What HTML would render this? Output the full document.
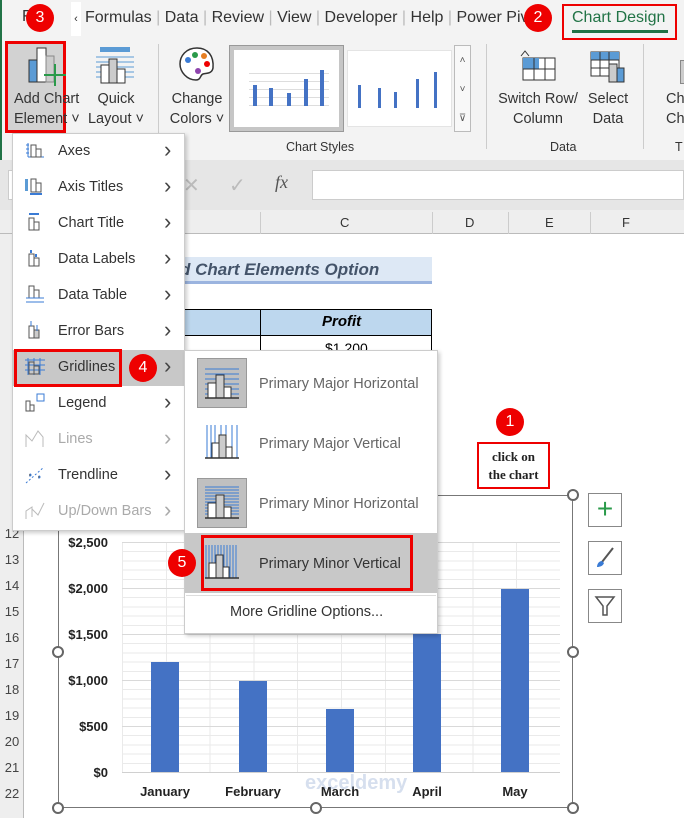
<!DOCTYPE html>
<html><head><meta charset="utf-8"><style>
*{margin:0;padding:0;box-sizing:border-box}
body{width:684px;height:818px;overflow:hidden;position:relative;background:#fff;font-family:"Liberation Sans",sans-serif;font-size:14px;color:#333}
.a{position:absolute}
.badge{position:absolute;width:28px;height:28px;border-radius:50%;background:#e00;color:#fff;font-size:16px;text-align:center;line-height:28px}
.mi{position:absolute;left:12px;width:172px;height:36px;font-size:14.5px;color:#333}
.mi span.t{position:absolute;left:46px;top:9px}
.mi .ch{position:absolute;left:152px;top:3px;font-size:22px;color:#444}
.si{position:absolute;left:184px;width:254px;height:60px}
.si .t{position:absolute;left:75px;top:22px;font-size:14.5px;color:#666}
.rn{position:absolute;left:2px;width:20px;text-align:center;font-size:13px;color:#444}
.yl{position:absolute;right:576px;font-size:13px;font-weight:bold;color:#222}
.ml{position:absolute;top:784px;font-size:13px;font-weight:bold;color:#222;transform:translateX(-50%)}
.bar{position:absolute;width:28px;background:#4472c4;bottom:46px}
.h{position:absolute;width:12px;height:12px;border:2px solid #666;border-radius:50%;background:#fff}
</style></head><body>
<div class="a" style="left:0;top:0;width:684px;height:160px;background:#f3f3f3"></div>
<div class="a" style="left:0;top:0;width:2px;height:818px;background:#217346"></div>
<div class="a" style="left:0;top:160px;width:684px;height:50px;background:#e6e6e6"></div>
<div class="a" style="left:22px;top:8px;font-size:16px;color:#333">F</div>
<div class="a" style="left:71px;top:2px;width:10px;height:34px;background:#fff;font-size:11px;text-align:center;line-height:34px">‹</div>
<div class="a" style="left:85px;top:9px;font-size:16px;color:#333;white-space:nowrap">Formulas<span style="color:#bbb"> | </span>Data<span style="color:#bbb"> | </span>Review<span style="color:#bbb"> | </span>View<span style="color:#bbb"> | </span>Developer<span style="color:#bbb"> | </span>Help<span style="color:#bbb"> | </span>Power Pivot</div>
<div class="a" style="left:562px;top:4px;width:115px;height:36px;border:2px solid #e00;background:#f3f3f3"></div>
<div class="a" style="left:572px;top:9px;font-size:16px;color:#217346">Chart Design</div>
<div class="a" style="left:572px;top:30px;width:96px;height:3px;background:#217346"></div>
<div class="badge" style="left:26px;top:4px">3</div>
<div class="badge" style="left:524px;top:4px">2</div>
<div class="a" style="left:5px;top:41px;width:61px;height:92px;background:#d2d2d2;border:3px solid #e00"></div>
<svg class="a" style="left:20px;top:44px" width="50" height="44"><rect x="9" y="16" width="8" height="22" fill="#5b9bd5" stroke="#333"/><rect x="17" y="4" width="9" height="34" fill="#fff" stroke="#333"/><rect x="26" y="12" width="8" height="26" fill="#ccc" stroke="#888"/><path d="M35 20v22M24 31h22" stroke="#2a9a4a" stroke-width="2"/></svg>
<div class="a" style="left:14px;top:89px;font-size:14.5px;line-height:20px;color:#333;white-space:nowrap">Add Chart<br>Element ˅</div>
<svg class="a" style="left:96px;top:47px" width="40" height="38"><rect x="4" y="0" width="30" height="5" fill="#5b9bd5"/><path d="M0 10h38M0 15h38M0 20h38M0 25h38M0 30h38" stroke="#5b9bd5"/><rect x="5" y="18" width="8" height="18" fill="#fff" stroke="#333"/><rect x="13" y="12" width="8" height="24" fill="#ccc" stroke="#333"/><rect x="21" y="22" width="8" height="14" fill="#fff" stroke="#333"/></svg>
<div class="a" style="left:80px;top:89px;font-size:14.5px;line-height:20px;text-align:center;width:72px;white-space:nowrap">Quick<br>Layout ˅</div>
<div class="a" style="left:158px;top:44px;width:1px;height:105px;background:#ccc"></div>
<svg class="a" style="left:178px;top:46px" width="38" height="36"><path d="M19 2C8 2 2 10 2 18s7 16 16 16c5 0 4-5 7-6s9 0 10-6C36 10 30 2 19 2z" fill="#fff" stroke="#333" stroke-width="1.5"/><circle cx="10" cy="14" r="3" fill="#3a7bd5"/><circle cx="17" cy="9" r="3" fill="#2a9a4a"/><circle cx="26" cy="10" r="3" fill="#e67e22"/><circle cx="29" cy="18" r="3" fill="#e00"/><circle cx="20" cy="25" r="3" fill="#8e44ad"/></svg>
<div class="a" style="left:160px;top:89px;font-size:14.5px;line-height:20px;text-align:center;width:74px;white-space:nowrap">Change<br>Colors ˅</div>
<div class="a" style="left:229px;top:45px;width:115px;height:87px;background:#c6c6c6;border:1px solid #999"></div>
<div class="a" style="left:234px;top:50px;width:105px;height:77px;background:#fff"></div>
<div class="a" style="left:249px;top:66px;width:80px;height:40px;background:repeating-linear-gradient(#fff 0 7px,#ddd 7px 8px)"></div>
<div class="a" style="left:253px;top:85px;width:4px;height:21px;background:#4472c4"></div>
<div class="a" style="left:269px;top:88px;width:4px;height:18px;background:#4472c4"></div>
<div class="a" style="left:287px;top:93px;width:4px;height:13px;background:#4472c4"></div>
<div class="a" style="left:304px;top:79px;width:4px;height:27px;background:#4472c4"></div>
<div class="a" style="left:320px;top:70px;width:4px;height:36px;background:#4472c4"></div>
<div class="a" style="left:347px;top:50px;width:105px;height:77px;background:#fff;border:1px solid #e4e4e4"></div>
<div class="a" style="left:358px;top:85px;width:3px;height:23px;background:#4472c4"></div>
<div class="a" style="left:378px;top:88px;width:3px;height:20px;background:#4472c4"></div>
<div class="a" style="left:394px;top:92px;width:3px;height:16px;background:#4472c4"></div>
<div class="a" style="left:416px;top:79px;width:3px;height:29px;background:#4472c4"></div>
<div class="a" style="left:434px;top:72px;width:3px;height:36px;background:#4472c4"></div>
<div class="a" style="left:454px;top:45px;width:17px;height:87px;border:1px solid #bbb;background:#f8f8f8;font-size:10px;text-align:center;color:#555;line-height:29px">˄<br>˅<br>⊽</div>
<div class="a" style="left:286px;top:140px;font-size:12.5px">Chart Styles</div>
<div class="a" style="left:486px;top:44px;width:1px;height:105px;background:#ccc"></div>
<svg class="a" style="left:519px;top:50px" width="38" height="32"><rect x="4" y="8" width="32" height="22" fill="#fff" stroke="#333"/><rect x="4" y="8" width="16" height="11" fill="#5b9bd5"/><path d="M4 19h32M15 8v22M26 8v22" stroke="#333"/><path d="M2 6l4-5 4 5" fill="none" stroke="#333"/></svg>
<div class="a" style="left:496px;top:89px;font-size:14.5px;line-height:20px;text-align:center;width:84px">Switch Row/<br>Column</div>
<svg class="a" style="left:589px;top:50px" width="40" height="36"><rect x="2" y="2" width="28" height="24" fill="#fff" stroke="#333"/><rect x="2" y="2" width="28" height="8" fill="#5b9bd5"/><path d="M2 10h28M2 18h28M11 2v24M20 2v24" stroke="#333"/><rect x="20" y="14" width="8" height="18" fill="#ccc" stroke="#333"/><rect x="28" y="18" width="7" height="14" fill="#5b9bd5" stroke="#333"/></svg>
<div class="a" style="left:586px;top:89px;font-size:14.5px;line-height:20px;text-align:center;width:44px">Select<br>Data</div>
<div class="a" style="left:550px;top:140px;font-size:12.5px">Data</div>
<div class="a" style="left:643px;top:44px;width:1px;height:105px;background:#ccc"></div>
<div class="a" style="left:680px;top:60px;width:6px;height:24px;background:#ccc;border:1px solid #888"></div>
<div class="a" style="left:666px;top:89px;font-size:14.5px;line-height:20px">Ch<br>Char</div>
<div class="a" style="left:675px;top:140px;font-size:12.5px">T</div>
<div class="a" style="left:8px;top:170px;width:150px;height:30px;background:#fff;border:1px solid #ccc"></div>
<div class="a" style="left:183px;top:173px;font-size:20px;color:#bbb">✕</div>
<div class="a" style="left:229px;top:173px;font-size:20px;color:#bbb">✓</div>
<div class="a" style="left:275px;top:172px;font-size:18px;font-style:italic;font-family:'Liberation Serif',serif;color:#555">fx</div>
<div class="a" style="left:312px;top:170px;width:372px;height:30px;background:#fff;border:1px solid #ccc"></div>
<div class="a" style="left:0;top:210px;width:684px;height:24px;background:#eee;border-bottom:1px solid #bbb"></div>
<div class="a" style="left:260px;top:212px;width:1px;height:22px;background:#ccc"></div>
<div class="a" style="left:432px;top:212px;width:1px;height:22px;background:#ccc"></div>
<div class="a" style="left:508px;top:212px;width:1px;height:22px;background:#ccc"></div>
<div class="a" style="left:590px;top:212px;width:1px;height:22px;background:#ccc"></div>
<div class="a" style="left:340px;top:215px;font-size:13px">C</div>
<div class="a" style="left:465px;top:215px;font-size:13px">D</div>
<div class="a" style="left:545px;top:215px;font-size:13px">E</div>
<div class="a" style="left:622px;top:215px;font-size:13px">F</div>
<div class="a" style="left:0;top:234px;width:24px;height:584px;background:#eee;border-right:1px solid #bbb"></div>
<div class="rn" style="top:526px">12</div><div class="rn" style="top:552px">13</div><div class="rn" style="top:578px">14</div><div class="rn" style="top:604px">15</div><div class="rn" style="top:630px">16</div><div class="rn" style="top:656px">17</div><div class="rn" style="top:682px">18</div><div class="rn" style="top:708px">19</div><div class="rn" style="top:734px">20</div><div class="rn" style="top:760px">21</div><div class="rn" style="top:786px">22</div>
<div class="a" style="left:185px;top:257px;width:247px;height:27px;background:#dde8f5;border-bottom:3px solid #9bb4df"></div>
<div class="a" style="left:180px;top:260px;font-size:17px;font-weight:bold;font-style:italic;color:#44546a">d Chart Elements Option</div>
<div class="a" style="left:184px;top:309px;width:248px;height:27px;background:#bdd7ee;border:1px solid #000"></div>
<div class="a" style="left:260px;top:309px;width:1px;height:45px;background:#000"></div>
<div class="a" style="left:322px;top:313px;font-size:15px;font-weight:bold;font-style:italic;color:#000">Profit</div>
<div class="a" style="left:431px;top:336px;width:1px;height:18px;background:#000"></div>
<div class="a" style="left:325px;top:340px;font-size:14px;color:#000">$1,200</div>
<div class="a" style="left:58px;top:495px;width:515px;height:313px;border:1px solid #777;background:#fff"></div>
<div class="a" style="left:122px;top:542px;width:438px;height:230px;background-image:repeating-linear-gradient(#eaeaea 0 1px,transparent 1px 9.2px),repeating-linear-gradient(90deg,#eaeaea 0 1px,transparent 1px 43.8px)"></div>
<div class="a" style="left:122px;top:542px;width:438px;height:230px;background-image:repeating-linear-gradient(#d9d9d9 0 1px,transparent 1px 46px)"></div>
<div class="a" style="left:122px;top:772px;width:438px;height:1px;background:#d0d0d0"></div>
<div class="yl" style="top:535px">$2,500</div><div class="yl" style="top:581px">$2,000</div><div class="yl" style="top:627px">$1,500</div><div class="yl" style="top:673px">$1,000</div><div class="yl" style="top:719px">$500</div><div class="yl" style="top:765px">$0</div>
<div class="bar" style="left:151px;top:662px;height:110px"></div>
<div class="bar" style="left:239px;top:681px;height:91px"></div>
<div class="bar" style="left:326px;top:709px;height:63px"></div>
<div class="bar" style="left:413px;top:634px;height:138px"></div>
<div class="bar" style="left:501px;top:589px;height:183px"></div>
<div class="ml" style="left:165px">January</div><div class="ml" style="left:253px">February</div><div class="ml" style="left:340px">March</div><div class="ml" style="left:427px">April</div><div class="ml" style="left:515px">May</div>
<div class="a" style="left:305px;top:772px;font-size:20px;font-weight:bold;color:rgba(120,150,200,.3)">exceldemy</div>
<div class="h" style="left:52px;top:489px"></div><div class="h" style="left:567px;top:489px"></div>
<div class="h" style="left:52px;top:646px"></div><div class="h" style="left:567px;top:646px"></div>
<div class="h" style="left:52px;top:802px"></div><div class="h" style="left:310px;top:802px"></div><div class="h" style="left:567px;top:802px"></div>
<div class="a" style="left:588px;top:493px;width:34px;height:34px;border:1px solid #888;background:#fff;color:#2a9a4a;font-size:28px;text-align:center;line-height:30px">+</div>
<div class="a" style="left:588px;top:541px;width:34px;height:34px;border:1px solid #888;background:#fff"><svg width="32" height="32"><path d="M24 6L13 20" stroke="#555" stroke-width="2"/><path d="M13 19c-3 0-5 3-5 6 3 0 6-1 7-4z" fill="#3a7bd5"/></svg></div>
<div class="a" style="left:588px;top:589px;width:34px;height:34px;border:1px solid #888;background:#fff"><svg width="32" height="32"><path d="M7 7h18l-7 9v9h-4v-9z" fill="none" stroke="#555" stroke-width="1.5"/></svg></div>
<div class="badge" style="left:496px;top:408px">1</div>
<div class="a" style="left:477px;top:442px;width:73px;height:47px;border:2px solid #e00;background:#fff;font-family:'Liberation Serif',serif;font-weight:bold;font-size:13px;text-align:center;line-height:18px;padding-top:4px;color:#222">click on<br>the chart</div>
<div class="a" style="left:12px;top:133px;width:173px;height:398px;background:#fff;border:1px solid #ccc;box-shadow:2px 2px 4px rgba(0,0,0,.2)"></div>
<div class="a" style="left:12px;top:350px;width:172px;height:36px;background:#c8c8c8"></div>
<div class="a" style="left:14px;top:349px;width:108px;height:38px;border:3px solid #e00"></div>
<svg class="a" style="left:24px;top:141px" width="24" height="380" fill="none" stroke="#555">
<g><path d="M4 2v14M2 4h3M2 8h3M2 12h3M4 16h16" stroke="#3a7bd5"/><rect x="7" y="4" width="5" height="12"/><rect x="12" y="8" width="5" height="8"/></g>
<g transform="translate(0,36)"><rect x="1" y="2" width="3" height="12" fill="#5b9bd5" stroke="none"/><rect x="7" y="2" width="5" height="13"/><rect x="12" y="6" width="5" height="9"/><path d="M6 17h12" stroke="#3a7bd5" stroke-width="2"/></g>
<g transform="translate(0,72)"><path d="M5 1h10" stroke="#3a7bd5" stroke-width="2"/><rect x="5" y="5" width="5" height="12"/><rect x="10" y="9" width="5" height="8"/></g>
<g transform="translate(0,108)"><rect x="5" y="5" width="5" height="12"/><rect x="10" y="9" width="5" height="8"/><path d="M7 1v3M12 5v3" stroke="#3a7bd5" stroke-width="2"/></g>
<g transform="translate(0,144)"><rect x="5" y="1" width="5" height="12"/><rect x="10" y="5" width="5" height="8"/><path d="M2 13h18M2 17h18" stroke="#3a7bd5"/></g>
<g transform="translate(0,180)"><rect x="5" y="5" width="5" height="12"/><rect x="10" y="9" width="5" height="8" fill="#ccc"/><path d="M7 0v5M13 4v6" stroke="#3a7bd5"/></g>
<g transform="translate(0,216)"><path d="M1 3h20M1 8h20M1 13h20M4 1v17M10 1v17M16 1v17" stroke="#3a7bd5"/><rect x="5" y="5" width="5" height="12"/><rect x="10" y="9" width="5" height="8"/></g>
<g transform="translate(0,252)"><rect x="2" y="8" width="4" height="10"/><rect x="6" y="12" width="4" height="6"/><rect x="13" y="1" width="7" height="7" stroke="#3a7bd5"/></g>
<g transform="translate(0,288)" stroke="#bbb"><path d="M2 18V6l6 6 6-10 5 6v10"/></g>
<g transform="translate(0,324)" stroke="#3a7bd5" stroke-dasharray="2 2"><path d="M2 18L20 2"/><circle cx="6" cy="10" r="1" fill="#555"/><circle cx="15" cy="12" r="1" fill="#555"/></g>
<g transform="translate(0,360)" stroke="#bbb"><path d="M2 18V10l6-4v10M8 8l6 6 6-12"/></g>
</svg>
<div class="mi" style="top:134px"><span class="t">Axes</span><span class="ch">›</span></div>
<div class="mi" style="top:170px"><span class="t">Axis Titles</span><span class="ch">›</span></div>
<div class="mi" style="top:206px"><span class="t">Chart Title</span><span class="ch">›</span></div>
<div class="mi" style="top:242px"><span class="t">Data Labels</span><span class="ch">›</span></div>
<div class="mi" style="top:278px"><span class="t">Data Table</span><span class="ch">›</span></div>
<div class="mi" style="top:314px"><span class="t">Error Bars</span><span class="ch">›</span></div>
<div class="mi" style="top:350px"><span class="t">Gridlines</span><span class="ch">›</span></div>
<div class="mi" style="top:386px"><span class="t">Legend</span><span class="ch">›</span></div>
<div class="mi" style="top:422px;color:#aaa"><span class="t">Lines</span><span class="ch" style="color:#aaa">›</span></div>
<div class="mi" style="top:458px"><span class="t">Trendline</span><span class="ch">›</span></div>
<div class="mi" style="top:494px;color:#aaa"><span class="t">Up/Down Bars</span><span class="ch" style="color:#aaa">›</span></div>
<div class="badge" style="left:129px;top:354px">4</div>
<div class="a" style="left:184px;top:350px;width:254px;height:284px;background:#fff;border:1px solid #ccc;box-shadow:2px 2px 4px rgba(0,0,0,.2)"></div>
<div class="a" style="left:185px;top:533px;width:252px;height:60px;background:#c8c8c8"></div>
<div class="a" style="left:201px;top:535px;width:212px;height:56px;border:3px solid #e00"></div>
<div class="a" style="left:186px;top:595px;width:250px;height:1px;background:#ddd"></div>
<div class="a" style="left:197px;top:358px;width:50px;height:50px;background:#c0c0c0;border:1px solid #999"></div>
<div class="a" style="left:197px;top:478px;width:50px;height:50px;background:#c0c0c0;border:1px solid #999"></div>
<svg class="a" style="left:204px;top:365px" width="38" height="220" fill="#fff" stroke="#333">
<g><path d="M1 4h34M1 9h34M1 14h34M1 19h34M1 24h34M1 29h34" stroke="#3a7bd5"/><rect x="4" y="18" width="8" height="15"/><rect x="12" y="10" width="8" height="23" fill="#ccc"/><rect x="20" y="22" width="7" height="11"/><path d="M1 33h34" stroke-width="1.5"/></g>
<g transform="translate(0,60)"><path d="M3 0v33M7 0v33M11 0v33M17 0v33M22 0v33M28 0v33M33 0v33" stroke="#3a7bd5"/><rect x="8" y="18" width="7" height="15"/><rect x="15" y="10" width="7" height="23" fill="#ccc"/><rect x="22" y="22" width="6" height="11"/><path d="M1 33h34" stroke-width="1.5"/></g>
<g transform="translate(0,120)"><path d="M1 2h34M1 5h34M1 8h34M1 11h34M1 14h34M1 17h34M1 20h34M1 23h34M1 26h34M1 29h34" stroke="#3a7bd5"/><rect x="4" y="18" width="8" height="15"/><rect x="12" y="10" width="8" height="23" fill="#ccc"/><rect x="20" y="22" width="7" height="11"/><path d="M1 33h34" stroke-width="1.5"/></g>
<g transform="translate(0,180)"><path d="M2 0v33M5 0v33M8 0v33M11 0v33M14 0v33M17 0v33M20 0v33M23 0v33M26 0v33M29 0v33M32 0v33" stroke="#3a7bd5"/><rect x="5" y="18" width="7" height="15"/><rect x="12" y="10" width="7" height="23" fill="#ccc"/><rect x="19" y="22" width="6" height="11"/><path d="M1 33h34" stroke-width="1.5"/></g>
</svg>
<div class="si" style="top:354px"><span class="t">Primary Major Horizontal</span></div>
<div class="si" style="top:414px"><span class="t">Primary Major Vertical</span></div>
<div class="si" style="top:474px"><span class="t">Primary Minor Horizontal</span></div>
<div class="si" style="top:534px"><span class="t" style="color:#333">Primary Minor Vertical</span></div>
<div class="a" style="left:230px;top:604px;font-size:14.5px;color:#333">More Gridline Options...</div>
<div class="badge" style="left:168px;top:549px">5</div>
</body></html>
